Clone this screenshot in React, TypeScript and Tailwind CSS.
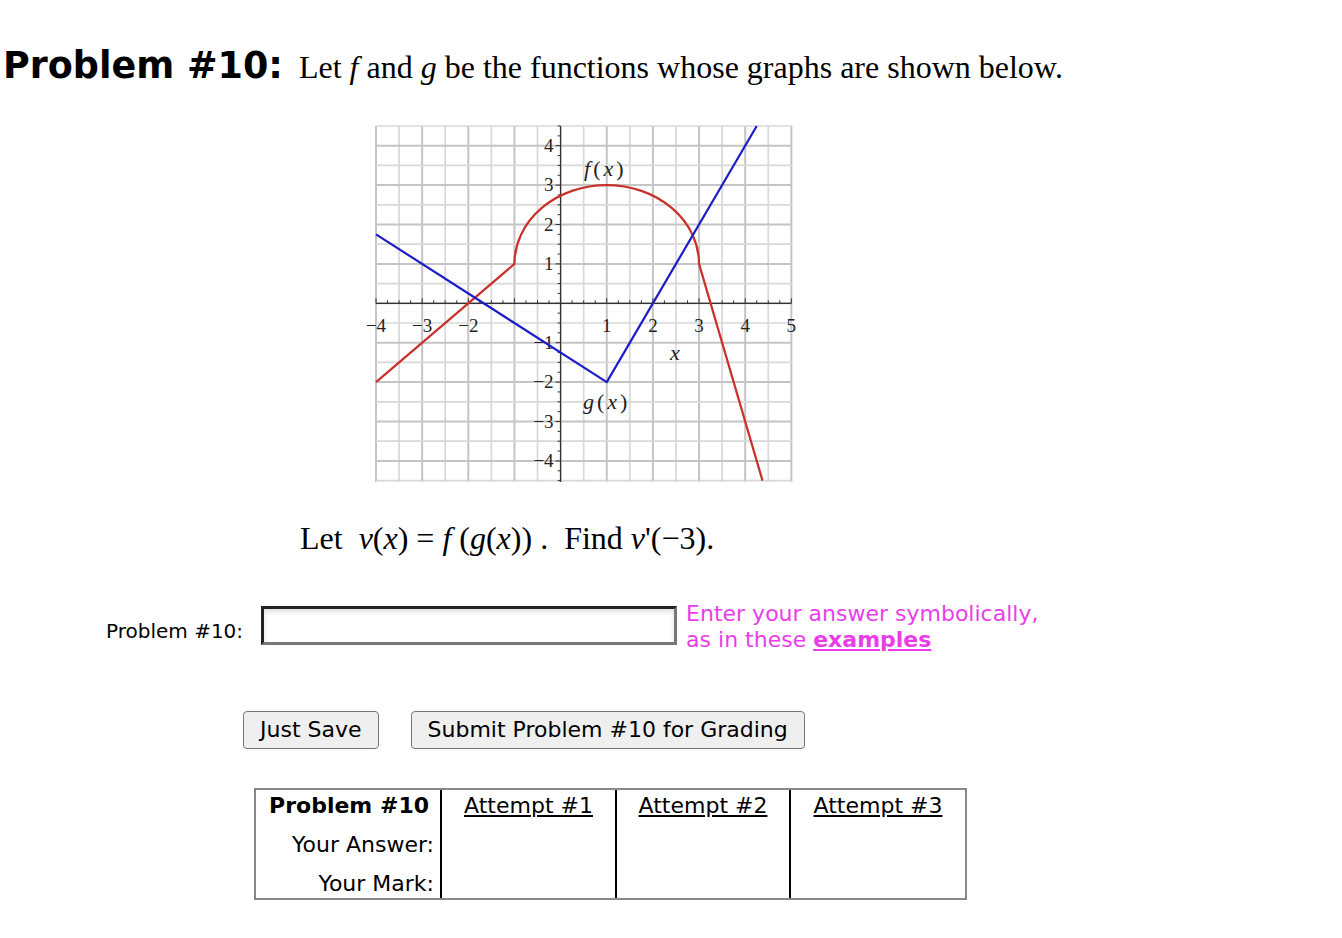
import React from "react";

const X = (x: number) => (x + 4) * 46.15;
const Y = (y: number) => (4.5 - y) * 39.4;

function Graph() {
  const vLines: React.ReactNode[] = [];
  for (let i = -8; i <= 10; i++) {
    const x = X(i / 2);
    const major = i % 2 === 0;
    vLines.push(
      <line key={"v" + i} x1={x} y1={0} x2={x} y2={356} stroke={major ? "#c4c4c4" : "#d8d8d8"} strokeWidth={major ? 2 : 1.7} />
    );
  }
  const hLines: React.ReactNode[] = [];
  for (let j = -9; j <= 9; j++) {
    const y = Y(j / 2);
    const major = j % 2 === 0;
    hLines.push(
      <line key={"h" + j} x1={0} y1={y} x2={416} y2={y} stroke={major ? "#c4c4c4" : "#d8d8d8"} strokeWidth={major ? 2 : 1.7} />
    );
  }
  const ticks: React.ReactNode[] = [];
  for (let k = -16; k <= 20; k++) {
    const len = k % 4 === 0 ? 5 : 3;
    ticks.push(<line key={"tx" + k} x1={X(k / 4)} y1={Y(0)} x2={X(k / 4)} y2={Y(0) - len} stroke="#333" strokeWidth={1} />);
  }
  for (let k = -18; k <= 18; k++) {
    const len = k % 4 === 0 ? 5 : 3;
    ticks.push(<line key={"ty" + k} x1={X(0)} y1={Y(k / 4)} x2={X(0) - len} y2={Y(k / 4)} stroke="#333" strokeWidth={1} />);
  }
  const font = "'Liberation Serif', 'Times New Roman', serif";
  const xl = [-4, -3, -2, 1, 2, 3, 4, 5];
  const yl = [4, 3, 2, 1, -1, -2, -3, -4];
  const red = "#c8302a";
  const blue = "#1c1cc8";
  return (
    <svg width={416} height={356} viewBox="0 0 416 356" className="block overflow-visible">
      <rect x={0} y={0} width={416} height={356} fill="#ffffff" />
      {vLines}
      {hLines}
      <line x1={X(-4)} y1={Y(0)} x2={X(5)} y2={Y(0)} stroke="#333" strokeWidth={1.2} />
      <line x1={X(0)} y1={0} x2={X(0)} y2={356} stroke="#333" strokeWidth={1.2} />
      {ticks}
      {xl.map((v) => (
        <text key={"xl" + v} x={X(v)} y={Y(0) + 29} textAnchor="middle" fontFamily={font} fontSize={19} fill="#222">
          {v < 0 ? "\u2212" + Math.abs(v) : v}
        </text>
      ))}
      {yl.map((v) => (
        <text key={"yl" + v} x={X(0) - 7} y={Y(v) + 6} textAnchor="end" fontFamily={font} fontSize={19} fill="#222">
          {v < 0 ? "\u2212" + Math.abs(v) : v}
        </text>
      ))}
      <text x={208} y={50} fontFamily={font} fontSize={22} fill="#222" letterSpacing={3}>
        <tspan fontStyle="italic">f</tspan>
        <tspan>(</tspan>
        <tspan fontStyle="italic">x</tspan>
        <tspan>)</tspan>
      </text>
      <text x={207} y={283} fontFamily={font} fontSize={22} fill="#222" letterSpacing={3}>
        <tspan fontStyle="italic">g</tspan>
        <tspan>(</tspan>
        <tspan fontStyle="italic">x</tspan>
        <tspan>)</tspan>
      </text>
      <text x={294} y={234} fontFamily={font} fontSize={22} fontStyle="italic" fill="#222">
        x
      </text>
      <path
        d={`M ${X(-4)} ${Y(-2)} L ${X(-1)} ${Y(1)} A ${2 * 46.15} ${2 * 39.4} 0 0 1 ${X(3)} ${Y(1)} L ${X(4.375)} ${Y(-4.5)}`}
        fill="none"
        stroke={red}
        strokeWidth={2.2}
        strokeLinejoin="round"
      />
      <path
        d={`M ${X(-4)} ${Y(1.75)} L ${X(1)} ${Y(-2)} L ${X(4.25)} ${Y(4.5)}`}
        fill="none"
        stroke={blue}
        strokeWidth={2.2}
        strokeLinejoin="round"
      />
    </svg>
  );
}

export default function App() {
  return (
    <div className="min-h-[938px] bg-white text-black font-['DejaVu_Sans',_Verdana,_sans-serif]">
      <div className="pt-[44px] pl-[3px] flex items-baseline h-[88px]">
        <span className="text-[36.5px] leading-[44px] font-bold">Problem #10:</span>
        <span className="ml-[16px] text-[32px] leading-[44px] font-['Liberation_Serif',_'Times_New_Roman',_serif]">
          Let <i>f</i> and <i>g</i> be the functions whose graphs are shown below.
        </span>
      </div>

      <div className="ml-[376px] mt-[38px]">
        <Graph />
      </div>

      <div className="ml-[300px] mt-[38px] h-[36px] text-[32px] leading-[36px] whitespace-pre font-['Liberation_Serif',_'Times_New_Roman',_serif]">
        {"Let  "}
        <i>v</i>(<i>x</i>){" = "}
        <i>f</i>{" ("}
        <i>g</i>(<i>x</i>)){" .  Find "}
        <i>v</i>'(−3).
      </div>

      <div className="mt-[45px] flex items-start">
        <div className="ml-[106px] mt-[18px] text-[20px] leading-[24px]">Problem #10:</div>
        <div className="ml-[18px] mt-[5px] w-[416px] h-[39px] border-[3px] border-t-[#222] border-l-[#222] border-b-[#777] border-r-[#777] bg-white shadow-[inset_0_3px_5px_rgba(0,0,0,0.12)]" />
        <div className="ml-[9px] text-[22px] leading-[26px] text-[#ea3dea]">
          <div>Enter your answer symbolically,</div>
          <div>
            as in these <span className="font-bold underline">examples</span>
          </div>
        </div>
      </div>

      <div className="mt-[58px] ml-[243px] flex gap-[32px]">
        <button className="h-[38px] px-[16px] text-[22px] leading-[26px] bg-[#efefef] border-[1.5px] border-[#767676] rounded-[4px] text-black">
          Just Save
        </button>
        <button className="h-[38px] px-[16px] text-[22px] leading-[26px] bg-[#efefef] border-[1.5px] border-[#767676] rounded-[4px] text-black">
          Submit Problem #10 for Grading
        </button>
      </div>

      <div className="mt-[39px] ml-[254px] w-[713px] border-2 border-[#888] flex text-[22px] leading-[26px]">
        <div className="w-[186px] border-r-2 border-black flex flex-col items-end gap-[13px] pr-[6px] pt-[3px] pb-[1px]">
          <div className="font-bold mr-[5px]">Problem #10</div>
          <div>Your Answer:</div>
          <div>Your Mark:</div>
        </div>
        <div className="w-[175px] border-r-2 border-black flex justify-center pt-[3px]">
          <div className="underline">Attempt #1</div>
        </div>
        <div className="w-[174px] border-r-2 border-black flex justify-center pt-[3px]">
          <div className="underline">Attempt #2</div>
        </div>
        <div className="flex-1 flex justify-center pt-[3px]">
          <div className="underline">Attempt #3</div>
        </div>
      </div>
    </div>
  );
}
